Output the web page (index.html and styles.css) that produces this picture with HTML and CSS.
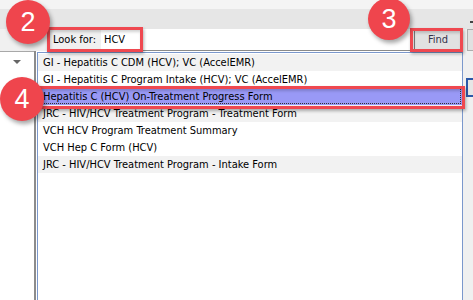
FILE: index.html
```html
<!DOCTYPE html>
<html>
<head>
<meta charset="utf-8">
<link rel="stylesheet" href="styles.css">
</head>
<body>
<div class="app">
  <div class="top"></div>
  <div class="band"></div>
  <div class="toolbar">
    <div class="lead"></div>
    <div class="label">Look for:</div>
    <div class="input">HCV</div>
    <div class="find">Find</div>
    <div class="edge"></div>
  </div>
  <div class="main">
    <div class="left">
      <div class="combo"><span class="arrow"></span></div>
    </div>
    <div class="vline"></div>
    <div class="list">
      <div class="row alt">GI - Hepatitis C CDM (HCV); VC (AccelEMR)</div>
      <div class="row">GI - Hepatitis C Program Intake (HCV); VC (AccelEMR)</div>
      <div class="row sel">Hepatitis C (HCV) On-Treatment Progress Form</div>
      <div class="row alt">JRC - HIV/HCV Treatment Program - Treatment Form</div>
      <div class="row">VCH HCV Program Treatment Summary</div>
      <div class="row">VCH Hep C Form (HCV)</div>
      <div class="row alt">JRC - HIV/HCV Treatment Program - Intake Form</div>
    </div>
    <div class="rstrip">
      <div class="rbtn"></div>
    </div>
  </div>
</div>
<span class="mark"></span>
<div class="box box2"></div>
<div class="box box3"></div>
<div class="box box4"></div>
<div class="circle c2">2</div>
<div class="circle c3">3</div>
<div class="circle c4">4</div>
</body>
</html>
```
FILE: styles.css
```css
html, body {
  margin: 0;
  padding: 0;
}
body {
  width: 473px;
  height: 300px;
  overflow: hidden;
  position: relative;
  background: #ffffff;
  font-family: "DejaVu Sans Condensed", "Liberation Sans", Arial, sans-serif;
  font-stretch: condensed;
  font-size: 11px;
  color: #000;
}
.app {
  display: flex;
  flex-direction: column;
  height: 300px;
}
.top {
  height: 9px;
  background: #f4f4f4;
}
.band {
  height: 20px;
  background: #e6e6e6;
}
.toolbar {
  height: 22px;
  display: flex;
  background: #f0f0f0;
}
.lead {
  width: 47px;
}
.label {
  width: 54px;
  box-sizing: border-box;
  padding-left: 6px;
  line-height: 21px;
  white-space: nowrap;
}
.input {
  width: 312px;
  box-sizing: border-box;
  background: #fff;
  border-bottom: 1px solid #8a8a8a;
  padding-left: 3px;
  line-height: 21px;
}
.find {
  width: 48px;
  margin-left: 1px;
  box-sizing: border-box;
  background: #e1e1e1;
  border: 1px solid #adadad;
  border-left-color: #7a7a7a;
  color: #33334a;
  text-align: center;
  line-height: 20px;
}
.edge {
  flex: 1;
  margin-left: 5px;
  background: #e1e1e1;
  border: 1px solid #adadad;
  border-right: none;
}
.main {
  flex: 1;
  display: flex;
  background: #fff;
}
.left {
  width: 34px;
  border-top: 1px solid #a8a8a8;
}
.combo {
  height: 18px;
  display: flex;
  align-items: center;
  justify-content: center;
}
.arrow {
  width: 0;
  height: 0;
  border-left: 4px solid transparent;
  border-right: 4px solid transparent;
  border-top: 4px solid #666;
  margin-top: 2px;
}
.vline {
  width: 2px;
  margin-right: 1px;
  background: #8c8c8c;
}
.list {
  width: 426px;
  box-sizing: border-box;
  margin-top: 1px;
  border: 1px solid #7b98cc;
  border-bottom: none;
  padding-top: 1px;
}
.row {
  height: 17px;
  line-height: 17px;
  padding-left: 5px;
  white-space: nowrap;
}
.row.alt {
  background: #f2f2f2;
}
.row.sel {
  background: #9999f6;
  position: relative;
}
.row.sel::after {
  content: "";
  position: absolute;
  left: 0;
  right: 1px;
  top: 0;
  bottom: 1px;
  border: 1px dotted #333;
}
.rstrip {
  flex: 1;
  background: #f0f0f0;
}
.rbtn {
  margin-top: 27px;
  margin-left: 3px;
  height: 19px;
  box-sizing: border-box;
  border: 2px solid #2b58a8;
  border-right: none;
  background: #e6e6e6;
}
.mark {
  position: absolute;
  left: 470px;
  top: 21px;
  width: 3px;
  height: 2px;
  background: #444;
}
.box {
  position: absolute;
  box-sizing: border-box;
  border: 3px solid #ef4850;
  box-shadow: 1px 2px 3px rgba(0, 0, 0, 0.3), inset 1px 2px 3px rgba(0, 0, 0, 0.18);
}
.box2 {
  left: 47px;
  top: 27px;
  width: 96px;
  height: 25px;
}
.box3 {
  left: 410px;
  top: 28px;
  width: 53px;
  height: 24px;
}
.box4 {
  left: 37px;
  top: 86px;
  width: 428px;
  height: 23px;
}
.circle {
  position: absolute;
  border-radius: 50%;
  background: #ef454d;
  color: #fff;
  font-family: "Liberation Sans", Arial, sans-serif;
  font-stretch: normal;
  font-size: 27px;
  text-align: center;
  box-shadow: 2px 3px 4px rgba(0, 0, 0, 0.35);
}
.c2 {
  left: 6px;
  top: 0;
  width: 44px;
  height: 44px;
  line-height: 44px;
}
.c3 {
  left: 368px;
  top: -2px;
  width: 42px;
  height: 42px;
  line-height: 42px;
}
.c4 {
  left: 0;
  top: 77px;
  width: 44px;
  height: 44px;
  line-height: 44px;
}
```
